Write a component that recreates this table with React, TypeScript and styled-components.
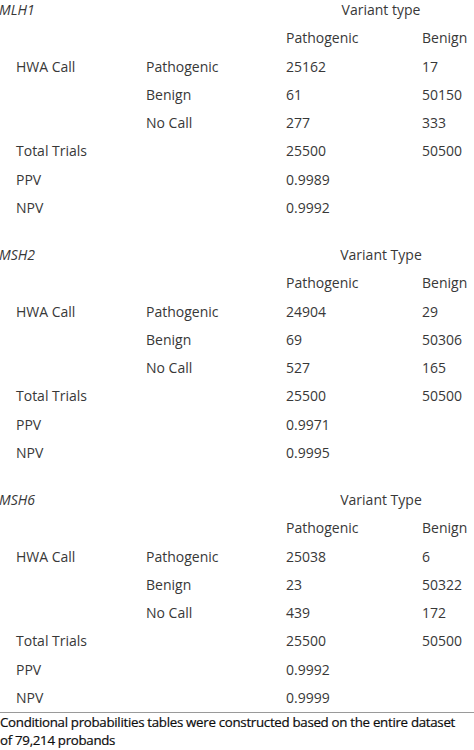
import React from "react";
import styled, { createGlobalStyle } from "styled-components";

const GlobalStyle = createGlobalStyle`
  html, body {
    margin: 0;
    padding: 0;
    background: #ffffff;
  }
  body {
    font-family: "Open Sans", "Noto Sans", sans-serif;
    overflow: hidden;
  }
`;

const Page = styled.div`
  width: 474px;
  margin-top: -4px;
  display: flex;
  flex-direction: column;
`;

const Tables = styled.div`
  display: flex;
  flex-direction: column;
  gap: 18.6px;
`;

const Section = styled.div`
  display: grid;
  grid-template-columns: 146px 140px 136px 1fr;
  grid-auto-rows: 28.3px;
  color: #383838;
  font-size: 14px;
  line-height: 28.3px;
  white-space: nowrap;
  overflow: hidden;
`;

const Cell = styled.div<{ $col: number; $span?: number; $indent?: boolean }>`
  grid-column: ${(p) => p.$col} / span ${(p) => p.$span ?? 1};
  padding-left: ${(p) => (p.$indent ? "16px" : "0")};
`;

const GeneName = styled.div`
  grid-column: 1 / span 2;
  font-style: italic;
  margin-left: -1px;
`;

const GroupHeader = styled.div`
  grid-column: 3 / span 2;
  text-align: center;
  padding-left: 2px;
`;

const Footnote = styled.div`
  border-top: 1.2px solid #9a9a9a;
  display: flex;
  flex-direction: column;
  font-size: 13.3px;
  letter-spacing: -0.3px;
  line-height: 18.1px;
  color: #0d0d0d;
  font-weight: 500;
  white-space: nowrap;
  -webkit-text-stroke: 0.2px #0d0d0d;
`;

const FootLine = styled.span`
  display: block;
`;

type Data = {
  gene: string;
  header: string;
  rows: [string, string, string][];
  total: [string, string];
  ppv: string;
  npv: string;
};

const data: Data[] = [
  {
    gene: "MLH1",
    header: "Variant type",
    rows: [
      ["Pathogenic", "25162", "17"],
      ["Benign", "61", "50150"],
      ["No Call", "277", "333"],
    ],
    total: ["25500", "50500"],
    ppv: "0.9989",
    npv: "0.9992",
  },
  {
    gene: "MSH2",
    header: "Variant Type",
    rows: [
      ["Pathogenic", "24904", "29"],
      ["Benign", "69", "50306"],
      ["No Call", "527", "165"],
    ],
    total: ["25500", "50500"],
    ppv: "0.9971",
    npv: "0.9995",
  },
  {
    gene: "MSH6",
    header: "Variant Type",
    rows: [
      ["Pathogenic", "25038", "6"],
      ["Benign", "23", "50322"],
      ["No Call", "439", "172"],
    ],
    total: ["25500", "50500"],
    ppv: "0.9992",
    npv: "0.9999",
  },
];

function GeneTable({ d }: { d: Data }) {
  return (
    <Section>
      <GeneName>{d.gene}</GeneName>
      <GroupHeader>{d.header}</GroupHeader>

      <Cell $col={3}>Pathogenic</Cell>
      <Cell $col={4}>Benign</Cell>

      {d.rows.map((r, i) => (
        <React.Fragment key={r[0]}>
          <Cell $col={1} $indent>
            {i === 0 ? "HWA Call" : ""}
          </Cell>
          <Cell $col={2}>{r[0]}</Cell>
          <Cell $col={3}>{r[1]}</Cell>
          <Cell $col={4}>{r[2]}</Cell>
        </React.Fragment>
      ))}

      <Cell $col={1} $indent $span={2}>
        Total Trials
      </Cell>
      <Cell $col={3}>{d.total[0]}</Cell>
      <Cell $col={4}>{d.total[1]}</Cell>

      <Cell $col={1} $indent $span={2}>
        PPV
      </Cell>
      <Cell $col={3} $span={2}>
        {d.ppv}
      </Cell>

      <Cell $col={1} $indent $span={2}>
        NPV
      </Cell>
      <Cell $col={3} $span={2}>
        {d.npv}
      </Cell>
    </Section>
  );
}

export default function App() {
  return (
    <>
      <GlobalStyle />
      <Page>
        <Tables>
          {data.map((d) => (
            <GeneTable key={d.gene} d={d} />
          ))}
        </Tables>
        <Footnote>
          <FootLine>
            Conditional probabilities tables were constructed based on the entire dataset
          </FootLine>
          <FootLine>of 79,214 probands</FootLine>
        </Footnote>
      </Page>
    </>
  );
}
